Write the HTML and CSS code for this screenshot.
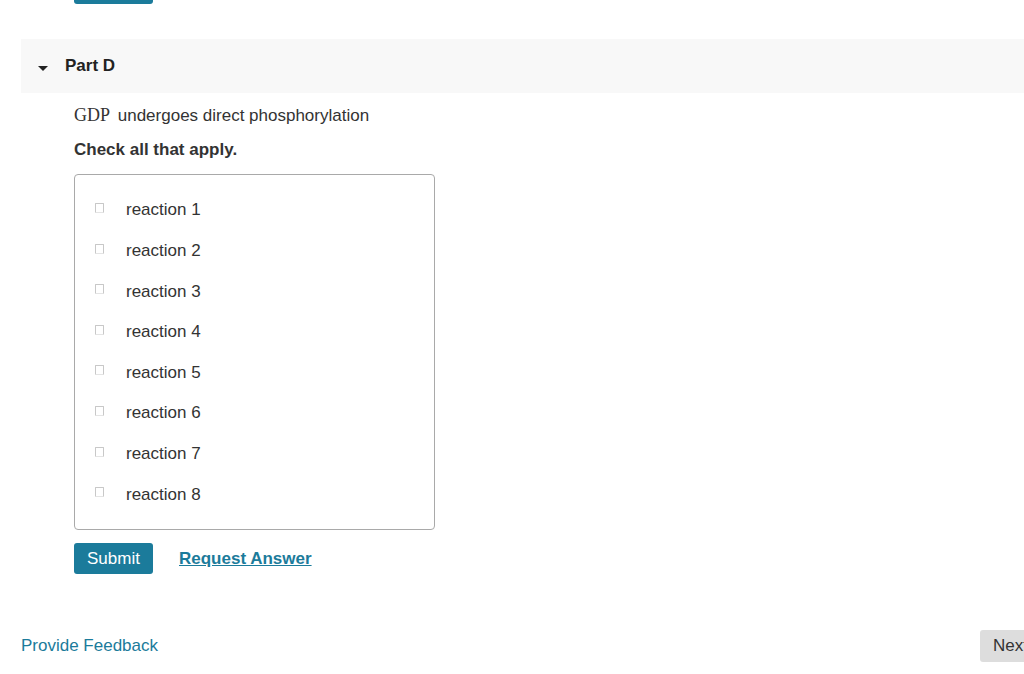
FILE: index.html
```html
<!DOCTYPE html>
<html lang="en">
<head>
    <meta charset="UTF-8">
    <meta name="viewport" content="width=device-width, initial-scale=1.0">
    <title>Part D</title>
    <link rel="stylesheet" href="styles.css">
</head>
<body>
    <div class="prev-submit"></div>

    <div class="part">
        <div class="part-header">
            <span class="caret"></span>
            <span class="part-title">Part D</span>
        </div>

        <div class="part-body">
            <p class="prompt"><span class="math">GDP</span> undergoes direct phosphorylation</p>
            <p class="instructions">Check all that apply.</p>

            <div class="options">
                <label class="option"><span class="box"></span>reaction 1</label>
                <label class="option"><span class="box"></span>reaction 2</label>
                <label class="option"><span class="box"></span>reaction 3</label>
                <label class="option"><span class="box"></span>reaction 4</label>
                <label class="option"><span class="box"></span>reaction 5</label>
                <label class="option"><span class="box"></span>reaction 6</label>
                <label class="option"><span class="box"></span>reaction 7</label>
                <label class="option"><span class="box"></span>reaction 8</label>
            </div>

            <div class="actions">
                <button class="btn-submit">Submit</button>
                <a href="#" class="request">Request Answer</a>
            </div>
        </div>
    </div>

    <div class="footer">
        <a href="#" class="feedback">Provide Feedback</a>
        <button class="btn-next">Next</button>
    </div>
</body>
</html>
```

FILE: styles.css
```css
body {
    font-family: "Liberation Sans", Arial, sans-serif;
    font-size: 17px;
    color: #333;
    margin: 0;
    padding: 0;
    overflow-x: hidden;
}
.prev-submit {
    margin-left: 74px;
    width: 79px;
    height: 4px;
    background-color: #1b7b9b;
    border-radius: 0 0 3px 3px;
}
.part {
    margin-top: 35px;
}
.part-header {
    margin-left: 21px;
    height: 54px;
    background-color: #f8f8f8;
    display: flex;
    align-items: center;
    padding-left: 17px;
}
.caret {
    width: 0;
    height: 0;
    border-left: 5px solid transparent;
    border-right: 5px solid transparent;
    border-top: 5px solid #222;
    margin-top: 5px;
    margin-right: 17px;
}
.part-title {
    font-weight: bold;
    color: #222;
    line-height: 18px;
    margin-top: -1px;
}
.part-body {
    padding-left: 74px;
}
.prompt {
    margin: 13px 0 0;
    line-height: 18px;
}
.math {
    font-family: "Liberation Serif", "Times New Roman", serif;
    font-size: 18px;
    margin-right: 3px;
}
.instructions {
    margin: 16px 0 0;
    font-weight: bold;
    line-height: 18px;
}
.options {
    margin-top: 15px;
    width: 359px;
    border: 1px solid #a9a9a9;
    border-radius: 4px;
    padding: 15.2px 0 14.2px;
}
.option {
    display: flex;
    align-items: center;
    height: 40.6px;
    padding-left: 20px;
}
.box {
    width: 7px;
    height: 8px;
    border: 1px solid #c8c8c8;
    border-bottom-color: #e4e4e4;
    border-radius: 1px;
    margin-right: 22px;
    margin-top: -5px;
}
.actions {
    display: flex;
    align-items: center;
    margin-top: 13px;
}
.btn-submit {
    width: 79px;
    height: 31px;
    background-color: #1b7b9b;
    color: #fff;
    border: none;
    border-radius: 3px;
    font-family: "Liberation Sans", Arial, sans-serif;
    font-size: 17px;
    padding: 0;
}
.request {
    margin-left: 26px;
    color: #1b7b9b;
    font-weight: bold;
    text-decoration: underline;
}
.footer {
    display: flex;
    justify-content: space-between;
    align-items: center;
    margin-top: 56px;
    padding-left: 21px;
}
.feedback {
    color: #1b7b9b;
    text-decoration: none;
}
.btn-next {
    width: 64px;
    height: 32px;
    margin-right: -20px;
    background-color: #dddddd;
    color: #333;
    border: none;
    border-radius: 3px;
    font-family: "Liberation Sans", Arial, sans-serif;
    font-size: 17px;
    text-align: left;
    padding-left: 13px;
}
```
